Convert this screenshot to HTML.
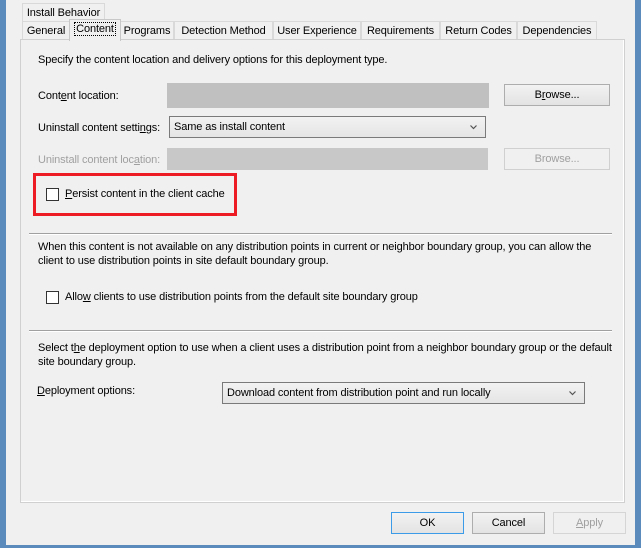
<!DOCTYPE html>
<html><head><style>
*{margin:0;padding:0;box-sizing:border-box}
body{width:641px;height:548px;background:#f0f0f0;position:relative;overflow:hidden;font-family:"Liberation Sans",sans-serif;font-size:11px;letter-spacing:-0.12px;color:#000}
.a{position:absolute;white-space:nowrap}
.tab{position:absolute;height:18px;top:21px;border:1px solid #d9d9d9;border-bottom:none;background:#f0f0f0;text-align:center;line-height:18px;white-space:nowrap;overflow:hidden}
.btn{position:absolute;border:1px solid #adadad;background:linear-gradient(#f2f2f2,#e3e3e3);text-align:center;line-height:21px;height:22px}
.gray{position:absolute;background:#c0c0c0}
.cb{position:absolute;width:13px;height:13px;border:1px solid #333;background:#fff}
.sep{position:absolute;left:29px;width:583px;height:2px;border-top:1px solid #a0a0a0;border-bottom:1px solid #fff}
.combo{position:absolute;height:22px;border:1px solid #7a7a7a;background:linear-gradient(#f2f2f2,#e5e5e5);padding-left:4px;line-height:21px;white-space:nowrap}
.combo svg{position:absolute;right:8px;top:8px}
u{text-decoration:underline}
</style></head><body>
<div class="a" style="left:0;top:0;width:6px;height:548px;background:#5b8bbd"></div>
<div class="a" style="left:635px;top:0;width:6px;height:548px;background:#5b8bbd"></div>
<div class="a" style="left:0;top:545px;width:641px;height:3px;background:#5b8bbd"></div>

<div class="a" style="left:20px;top:39px;width:605px;height:464px;border:1px solid #d0d0d0;background:#f0f0f0;box-shadow:inset -1px -1px 0 #fff"></div>

<div class="tab" style="left:22px;top:3px;width:83px;">Install Behavior</div>
<div class="tab" style="left:22px;width:48px">General</div>
<div class="tab" style="left:120px;width:54px">Programs</div>
<div class="tab" style="left:174px;width:99px">Detection Method</div>
<div class="tab" style="left:273px;width:88px">User Experience</div>
<div class="tab" style="left:361px;width:79px">Requirements</div>
<div class="tab" style="left:440px;width:77px">Return Codes</div>
<div class="tab" style="left:517px;width:80px">Dependencies</div>
<div class="tab" style="left:69px;top:19px;width:52px;height:22px;border-color:#c8c8c8;z-index:2;line-height:19px"><span style="outline:1px dotted #000;padding:0 1px">Content</span></div>

<div class="a" style="left:38px;top:54px">Specify the content location and delivery options for this deployment type.</div>
<div class="a" style="left:38px;top:90px">Cont<u>e</u>nt location:</div>
<div class="gray" style="left:167px;top:83px;width:322px;height:25px"></div>
<div class="btn" style="left:504px;top:84px;width:106px">B<u>r</u>owse...</div>
<div class="a" style="left:38px;top:122px">Uninstall content setti<u>n</u>gs:</div>
<div class="combo" style="left:169px;top:116px;width:317px">Same as install content<svg width="7" height="5"><path d="M0.5 0.5L3.5 3.5L6.5 0.5" fill="none" stroke="#555" stroke-width="1.2"/></svg></div>
<div class="a" style="left:38px;top:154px;color:#a0a0a0">Uninstall content loc<u>a</u>tion:</div>
<div class="gray" style="left:167px;top:148px;width:321px;height:22px;background:#c8c8c8"></div>
<div class="btn" style="left:504px;top:148px;width:106px;color:#a0a0a0;border-color:#d0d0d0;background:#f0f0f0">Browse...</div>

<div class="a" style="left:33px;top:173px;width:204px;height:43px;border:3px solid #ed1c24"></div>
<div class="cb" style="left:46px;top:188px"></div>
<div class="a" style="left:65px;top:188px"><u>P</u>ersist content in the client cache</div>

<div class="sep" style="top:233px"></div>
<div class="a" style="left:38px;top:240px;line-height:14px">When this content is not available on any distribution points in current or neighbor boundary group, you can allow the<br>client to use distribution points in site default boundary group.</div>
<div class="cb" style="left:46px;top:291px"></div>
<div class="a" style="left:65px;top:291px">Allo<u>w</u> clients to use distribution points from the default site boundary group</div>

<div class="sep" style="top:330px"></div>
<div class="a" style="left:38px;top:341px;line-height:14px">Select t<u>h</u>e deployment option to use when a client uses a distribution point from a neighbor boundary group or the default<br>site boundary group.</div>
<div class="a" style="left:37px;top:385px"><u>D</u>eployment options:</div>
<div class="combo" style="left:222px;top:382px;width:363px">Download content from distribution point and run locally<svg width="7" height="5"><path d="M0.5 0.5L3.5 3.5L6.5 0.5" fill="none" stroke="#555" stroke-width="1.2"/></svg></div>

<div class="btn" style="left:391px;top:512px;width:73px;border-color:#3c9be8">OK</div>
<div class="btn" style="left:472px;top:512px;width:73px">Cancel</div>
<div class="btn" style="left:553px;top:512px;width:73px;color:#a0a0a0;border-color:#d5d5d5;background:#f0f0f0"><u>A</u>pply</div>
</body></html>
